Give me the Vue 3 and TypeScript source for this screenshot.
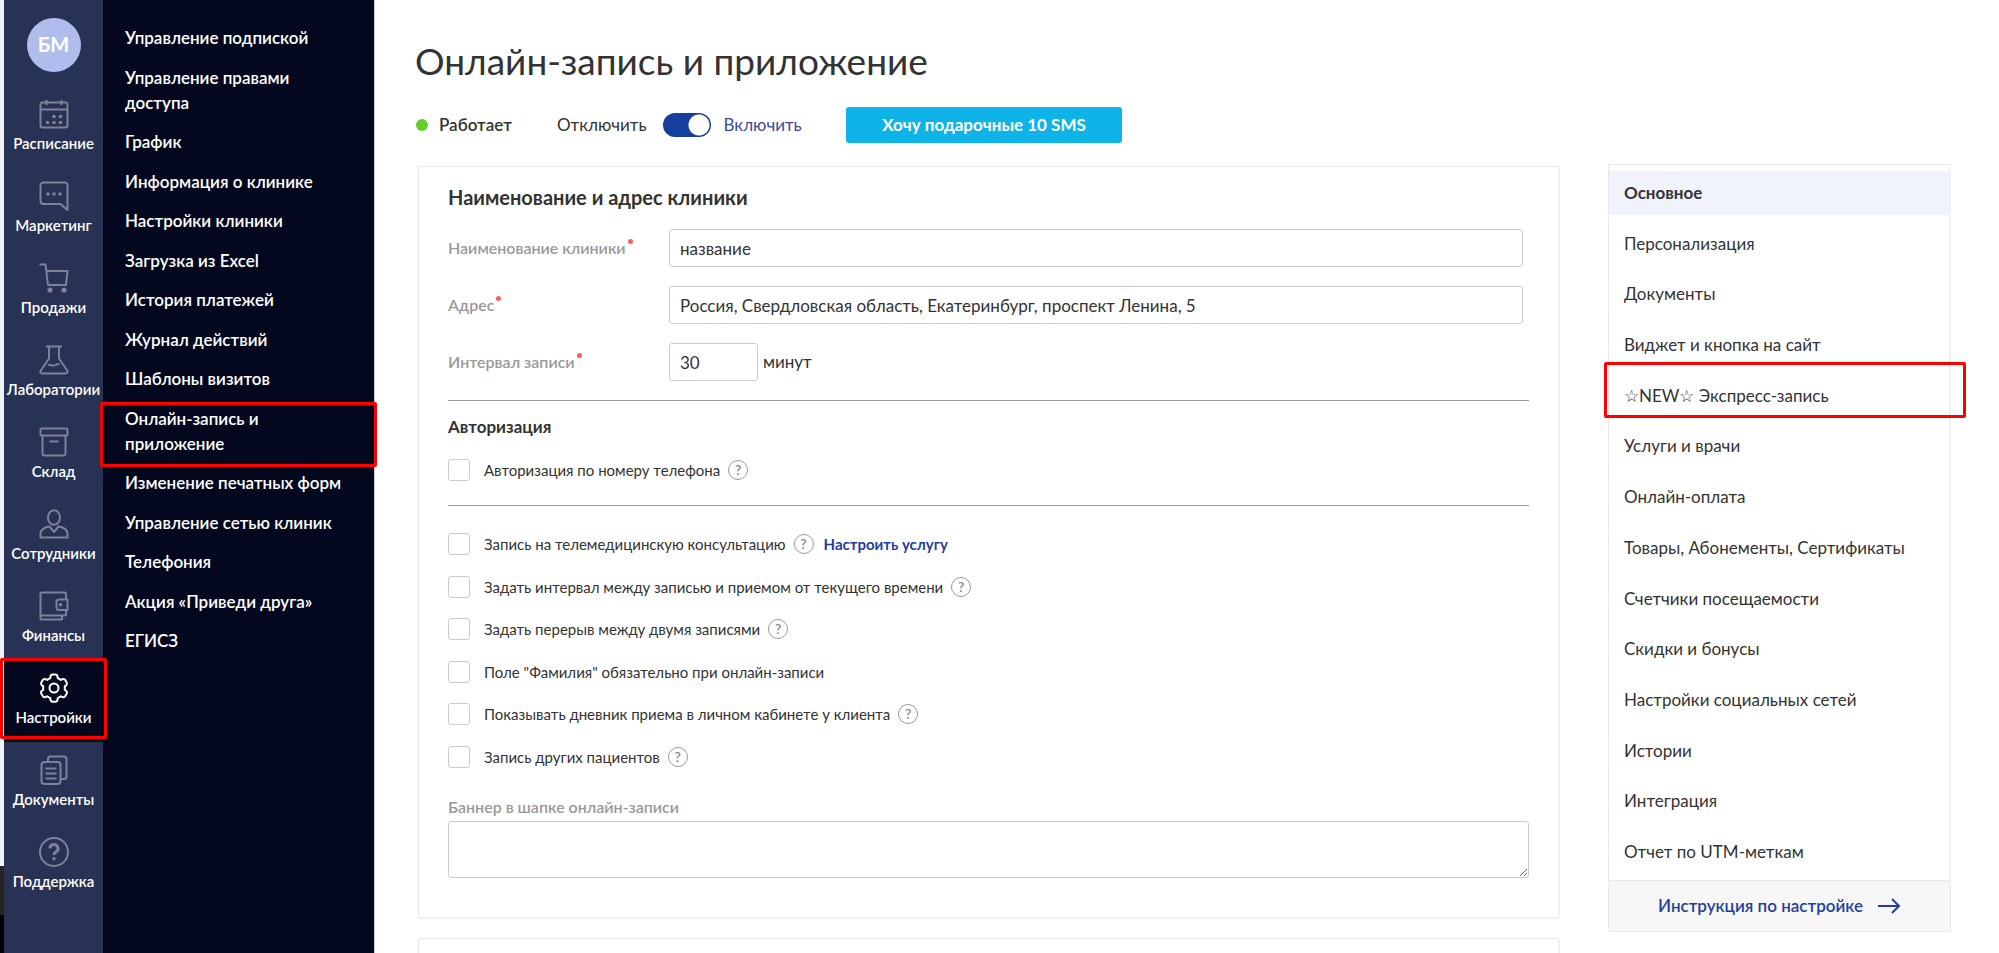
<script setup lang="ts">
import { ref } from 'vue'

interface RailItem {
  icon: string
  label: string
  active?: boolean
}

interface Option {
  id: string
  label: string
  help: boolean
  link?: string
  checked: boolean
}

const railItems: RailItem[] = [
  { icon: 'calendar', label: 'Расписание' },
  { icon: 'chat', label: 'Маркетинг' },
  { icon: 'cart', label: 'Продажи' },
  { icon: 'flask', label: 'Лаборатории' },
  { icon: 'box', label: 'Склад' },
  { icon: 'person', label: 'Сотрудники' },
  { icon: 'wallet', label: 'Финансы' },
  { icon: 'gear', label: 'Настройки', active: true },
  { icon: 'docs', label: 'Документы' },
  { icon: 'help', label: 'Поддержка' },
]

const menuItems: string[] = [
  'Управление подпиской',
  'Управление правами доступа',
  'График',
  'Информация о клинике',
  'Настройки клиники',
  'Загрузка из Excel',
  'История платежей',
  'Журнал действий',
  'Шаблоны визитов',
  'Онлайн-запись и приложение',
  'Изменение печатных форм',
  'Управление сетью клиник',
  'Телефония',
  'Акция «Приведи друга»',
  'ЕГИСЗ',
]
const markedMenuItem = 'Онлайн-запись и приложение'

const sections: string[] = [
  'Основное',
  'Персонализация',
  'Документы',
  'Виджет и кнопка на сайт',
  '☆NEW☆ Экспресс-запись',
  'Услуги и врачи',
  'Онлайн-оплата',
  'Товары, Абонементы, Сертификаты',
  'Счетчики посещаемости',
  'Скидки и бонусы',
  'Настройки социальных сетей',
  'Истории',
  'Интеграция',
  'Отчет по UTM-меткам',
]
const currentSection = 'Основное'
const markedSection = '☆NEW☆ Экспресс-запись'

const enabled = ref(true)
const clinicName = ref('название')
const address = ref('Россия, Свердловская область, Екатеринбург, проспект Ленина, 5')
const interval = ref('30')
const phoneAuth = ref(false)
const banner = ref('')

const options = ref<Option[]>([
  { id: 'tele', label: 'Запись на телемедицинскую консультацию', help: true, link: 'Настроить услугу', checked: false },
  { id: 'lead', label: 'Задать интервал между записью и приемом от текущего времени', help: true, checked: false },
  { id: 'break', label: 'Задать перерыв между двумя записями', help: true, checked: false },
  { id: 'surname', label: 'Поле "Фамилия" обязательно при онлайн-записи', help: false, checked: false },
  { id: 'diary', label: 'Показывать дневник приема в личном кабинете у клиента', help: true, checked: false },
  { id: 'others', label: 'Запись других пациентов', help: true, checked: false },
])
</script>

<template>
  <div class="page">
    <div class="edge"><span class="edge-dark"></span><span class="edge-black"></span></div>

    <nav class="rail" aria-label="Разделы">
      <a href="#" class="avatar">БМ</a>
      <a v-for="item in railItems" :key="item.icon" href="#" class="rail-item" :class="{ active: item.active }">
        <svg class="rail-icon" viewBox="0 0 30 30" aria-hidden="true">
          <g v-if="item.icon === 'calendar'">
            <rect x="1.5" y="3.5" width="27" height="25" rx="2" />
            <path d="M1.5 10.5h27M7.5 1v5M22.5 1v5" />
            <g class="dots">
              <circle cx="15" cy="17.5" r="1.8" /><circle cx="21.5" cy="17.5" r="1.8" />
              <circle cx="8.5" cy="23.5" r="1.8" /><circle cx="15" cy="23.5" r="1.8" /><circle cx="21.5" cy="23.5" r="1.8" />
            </g>
          </g>
          <g v-else-if="item.icon === 'chat'">
            <path d="M4.5 1.5h21a3 3 0 0 1 3 3v24.5L21.5 23h-17a3 3 0 0 1-3-3V4.500a3 3 0 0 1 3-3z" />
            <g class="dots"><circle cx="9" cy="13" r="1.8" /><circle cx="15" cy="13" r="1.8" /><circle cx="21" cy="13" r="1.8" /></g>
          </g>
          <g v-else-if="item.icon === 'cart'">
            <path d="M.5 1.5h6L9 22h18l1.500-14H7.500" />
            <g class="dots"><circle cx="11" cy="27" r="2.6" /><circle cx="25" cy="27" r="2.6" /></g>
          </g>
          <g v-else-if="item.icon === 'flask'">
            <path d="M7 1.500h16M10 1.500v12L1.800 25.500c-.9 1.500 0 3 1.700 3h23c1.700 0 2.600-1.500 1.700-3L20 13.500v-12M9 20.500c3-2 4.500 1.500 7.500-.5 1.500-1 2.500-1 4-1" />
          </g>
          <g v-else-if="item.icon === 'box'">
            <rect x="1.5" y="1.5" width="27" height="7" rx="1" />
            <path d="M3.500 8.500v18a2 2 0 0 0 2 2h19a2 2 0 0 0 2-2v-18M10.500 14.500h9" />
          </g>
          <g v-else-if="item.icon === 'person'">
            <ellipse cx="15" cy="8.5" rx="6" ry="7.3" />
            <path d="M10.500 17.500 15 23l4.500-5.500c5 .5 9 3.500 9 7v4h-27v-4c0-3.500 4-6.500 9-7z" />
          </g>
          <g v-else-if="item.icon === 'wallet'">
            <path d="M27 8V3a1.500 1.500 0 0 0-1.500-1.500H3A1.500 1.500 0 0 0 1.500 3v24.500a1 1 0 0 0 1 1h20.500V25M1.500 24.500h24A1.500 1.500 0 0 0 27 23v-4M28.500 8.500H20a2.500 2.500 0 0 0-2.500 2.500v5.500A2.500 2.500 0 0 0 20 19h8.500z" />
            <g class="dots"><circle cx="21.5" cy="13.7" r="1.8" /></g>
          </g>
          <g v-else-if="item.icon === 'gear'">
            <path d="M11.500 3.500q.3-2 2-2h3q1.700 0 2 2l.3 1.700 3 1.700 1.700-.7q1.900-.6 2.800.9l1.500 2.600q.8 1.500-.7 2.700l-1.300 1v3.400l1.300 1q1.500 1.200.7 2.700l-1.500 2.600q-.9 1.500-2.800.9l-1.700-.7-3 1.700-.3 1.700q-.3 2-2 2h-3q-1.700 0-2-2l-.3-1.700-3-1.700-1.700.7q-1.900.6-2.800-.9l-1.500-2.600q-.8-1.500.7-2.700l1.300-1v-3.400l-1.300-1q-1.500-1.200-.7-2.700l1.500-2.600q.9-1.500 2.800-.9l1.700.7 3-1.700z" />
            <circle cx="15" cy="15" r="4.500" />
          </g>
          <g v-else-if="item.icon === 'docs'">
            <rect x="2.5" y="7" width="19" height="22" rx="3" />
            <path d="M9 6.500V4a2.500 2.500 0 0 1 2.500-2.500H25a2.500 2.500 0 0 1 2.500 2.500v17.500a2.500 2.500 0 0 1-2.500 2.500h-3M6.500 13.500h11M6.500 18.500h11M6.500 23.500h11" />
          </g>
          <g v-else>
            <circle cx="15" cy="15" r="14" />
            <path class="query" d="M11 11.500a4 4 0 1 1 6 3.400c-1.400.8-2 1.500-2 3.100" />
            <g class="dots"><circle cx="15" cy="21.8" r="1.700" /></g>
          </g>
        </svg>
        <span>{{ item.label }}</span>
      </a>
    </nav>

    <nav class="submenu" aria-label="Настройки">
      <ul>
        <li v-for="item in menuItems" :key="item" :class="{ marked: item === markedMenuItem }">
          <a href="#">{{ item }}</a>
        </li>
      </ul>
    </nav>

    <main class="content">
      <h1>Онлайн-запись и приложение</h1>

      <div class="status">
        <span class="state"><i></i>Работает</span>
        <label class="switch">
          <span>Отключить</span>
          <input v-model="enabled" type="checkbox" role="switch" />
          <span class="on">Включить</span>
        </label>
        <button type="button" class="gift">Хочу подарочные 10 SMS</button>
      </div>

      <div class="columns">
        <div class="cards">
          <form class="card" @submit.prevent>
            <h2>Наименование и адрес клиники</h2>
            <div class="field">
              <label class="caption required" for="clinic">Наименование клиники</label>
              <input id="clinic" v-model="clinicName" type="text" class="box wide" />
            </div>
            <div class="field">
              <label class="caption required" for="address">Адрес</label>
              <input id="address" v-model="address" type="text" class="box wide" />
            </div>
            <div class="field">
              <label class="caption required" for="interval">Интервал записи</label>
              <input id="interval" v-model="interval" type="text" class="box short" />
              <span class="unit">минут</span>
            </div>
            <hr />

            <h3>Авторизация</h3>
            <div class="option">
              <label><input v-model="phoneAuth" type="checkbox" /><span>Авторизация по номеру телефона</span></label>
              <button type="button" class="hint" aria-label="Подсказка">?</button>
            </div>
            <hr />

            <div class="options">
              <div v-for="option in options" :key="option.id" class="option">
                <label><input v-model="option.checked" type="checkbox" /><span>{{ option.label }}</span></label>
                <button v-if="option.help" type="button" class="hint" aria-label="Подсказка">?</button>
                <a v-if="option.link" href="#" class="setup">{{ option.link }}</a>
              </div>
            </div>

            <label class="caption banner-caption" for="banner">Баннер в шапке онлайн-записи</label>
            <textarea id="banner" v-model="banner" class="box"></textarea>
          </form>
          <section class="card next"></section>
        </div>

        <aside class="sections">
          <ul>
            <li v-for="item in sections" :key="item" :class="{ current: item === currentSection, marked: item === markedSection }">
              <a href="#">{{ item }}</a>
            </li>
          </ul>
          <a href="#" class="guide">
            <span>Инструкция по настройке</span>
            <svg viewBox="0 0 24 18" aria-hidden="true"><path d="M1 9h21M15 2l7 7-7 7" /></svg>
          </a>
        </aside>
      </div>
    </main>
  </div>
</template>

<style>
html,
body {
  margin: 0;
  background: #fff;
}
</style>

<style scoped>
* {
  box-sizing: border-box;
}

.page {
  display: flex;
  height: 100vh;
  overflow: hidden;
  color: #333;
  font-family: Lato, Roboto, sans-serif;
  font-size: 17px;
  line-height: 24px;
}

a {
  color: inherit;
  text-decoration: none;
}

ul {
  margin: 0;
  padding: 0;
  list-style: none;
}

button,
input,
textarea {
  font: inherit;
  color: inherit;
}

.edge {
  display: flex;
  flex: 0 0 4px;
  flex-direction: column;
  justify-content: flex-end;
  background: #f1f4f6;
}

.edge-dark {
  height: 49px;
  background: #262322;
}

.edge-black {
  height: 38px;
  background: #000;
}

.rail {
  display: flex;
  flex: 0 0 99px;
  flex-direction: column;
  align-items: stretch;
  padding-top: 18px;
  background: #283255;
  color: #fff;
}

.avatar {
  align-self: center;
  width: 54px;
  height: 54px;
  margin-bottom: 14px;
  border-radius: 50%;
  background: #b0bdec;
  font-size: 20px;
  font-weight: 700;
  line-height: 52px;
  text-align: center;
}

.rail-item {
  position: relative;
  display: flex;
  flex: 0 0 82px;
  flex-direction: column;
  align-items: center;
  padding-top: 13px;
  font-size: 15px;
  font-weight: 600;
  line-height: 20px;
}

.rail-item span {
  margin-top: 4px;
}

.rail-icon {
  width: 30px;
  height: 30px;
  fill: none;
  stroke: #7c8298;
  stroke-width: 2;
  stroke-linejoin: round;
}

.dots {
  fill: #7c8298;
  stroke: none;
}

.query {
  stroke-width: 3;
}

.rail-item.active {
  background: #03081f;
}

.active .rail-icon {
  stroke: #fff;
}

.rail-item.active::after,
.marked::after {
  position: absolute;
  z-index: 2;
  border: 3px solid #f00;
  border-radius: 2px;
  content: "";
  pointer-events: none;
}

.rail-item.active::after {
  inset: -2px -4px 3px -4px;
}

.submenu {
  flex: 0 0 272px;
  padding: 25px 22px;
  border-right: 1px solid #c9ccd4;
  background: #03081f;
  color: #fff;
  font-weight: 600;
  line-height: 25px;
}

.submenu ul {
  display: flex;
  flex-direction: column;
  justify-content: space-between;
  min-height: 628px;
}

.submenu a {
  display: block;
  max-width: 190px;
}

.submenu li:nth-child(n + 11) a {
  max-width: none;
}

.marked {
  position: relative;
}

.submenu .marked::after {
  inset: -4px -25px -11px -25px;
}

.content {
  flex: 1;
  min-width: 0;
  padding: 37px 48px 0 43px;
}

h1 {
  margin: 0 0 22px -3px;
  font-size: 37px;
  font-weight: 400;
  line-height: 48px;
}

.status {
  display: flex;
  align-items: center;
  height: 36px;
  margin: 0 0 23px -2px;
}

.state {
  display: flex;
  align-items: center;
  gap: 11px;
  width: 141px;
  font-weight: 600;
}

.state i {
  width: 12px;
  height: 12px;
  border-radius: 50%;
  background: #66cc29;
}

.switch {
  display: flex;
  align-items: center;
  width: 289px;
}

.switch input {
  width: 48px;
  height: 24px;
  margin: 0 13px 0 16px;
  border-radius: 12px;
  appearance: none;
  background: radial-gradient(circle at 36px 12px, #fff 10px, #163e9f 11px);
}

.switch input:not(:checked) {
  background: radial-gradient(circle at 12px 12px, #fff 10px, #9aa0b0 11px);
}

.on {
  color: #3e4b98;
}

.gift {
  width: 276px;
  height: 36px;
  padding: 0;
  border: 0;
  border-radius: 3px;
  background: #0eb3e8;
  color: #fff;
  font-weight: 700;
}

.columns {
  display: flex;
  align-items: flex-start;
  gap: 48px;
}

.cards {
  flex: 1;
  min-width: 0;
}

.card {
  display: flex;
  flex-direction: column;
  margin-bottom: 19px;
  padding: 18px 29px 39px;
  border: 1px solid #e8e8e8;
  border-right: 2px solid #f1f1f1;
  border-bottom: 2px solid #f1f1f1;
  border-radius: 3px;
}

.card.next {
  height: 120px;
}

h2,
h3 {
  margin: 0;
  font-weight: 700;
  line-height: 24px;
}

h2 {
  margin-bottom: 20px;
  font-size: 20px;
}

h3 {
  margin: 14px 0 19px;
  font-size: 17px;
}

.field {
  display: flex;
  align-items: center;
  height: 38px;
  margin-bottom: 19px;
}

.caption {
  flex: 0 0 221px;
  color: #999;
  font-size: 16px;
  font-weight: 600;
}

.required::after {
  display: inline-block;
  width: 5px;
  height: 5px;
  margin-left: 2px;
  border-radius: 50%;
  background: #ff5c5c;
  vertical-align: 10px;
  content: "";
}

.box {
  height: 38px;
  padding: 0 10px;
  border: 1px solid #ccc;
  border-radius: 3px;
  outline: 0;
  background: #fff;
}

.wide {
  flex: 1;
  min-width: 0;
  margin-right: 6px;
}

.short {
  width: 89px;
}

.unit {
  margin-left: 5px;
}

hr {
  width: 100%;
  height: 1px;
  margin: 0;
  border: 0;
  background: #999ba0;
}

.option {
  display: flex;
  align-items: center;
  height: 24px;
  font-size: 15px;
}

.option label {
  display: flex;
  align-items: center;
}

.option input {
  width: 22px;
  height: 22px;
  margin: 0 14px 0 0;
  border: 1px solid #ccc;
  border-radius: 3px;
  appearance: none;
  background: #fff;
}

.option input:checked {
  background: #163e9f;
}

.hint {
  width: 20px;
  height: 20px;
  margin-left: 8px;
  padding: 0;
  border: 1px solid #999;
  border-radius: 50%;
  background: none;
  color: #888;
  font-size: 14px;
  font-weight: 600;
  line-height: 18px;
}

.setup {
  margin-left: 10px;
  color: #233e9e;
  font-weight: 700;
}

h3 + .option {
  margin-bottom: 23px;
}

.options {
  display: flex;
  flex-direction: column;
  justify-content: space-between;
  min-height: 237px;
  margin-top: 26px;
}

.banner-caption {
  flex: none;
  margin: 26px 0 2px;
}

textarea.box {
  display: block;
  width: 100%;
  height: 57px;
  min-height: 57px;
  resize: vertical;
}

.sections {
  position: relative;
  flex: 0 0 343px;
  margin-top: -2px;
}

.sections ul {
  display: flex;
  flex-direction: column;
  justify-content: space-between;
  min-height: 716px;
  padding: 6px 0;
  border: 1px solid #e8e8e8;
  border-right: 2px solid #f1f1f1;
  border-bottom: 0;
}

.sections li a {
  display: block;
  padding: 10px 15px;
}

.current {
  background: #f0f3fb;
  font-weight: 700;
}

.sections .marked::after {
  inset: -12px -17px 0 -5px;
}

.guide {
  display: flex;
  align-items: center;
  justify-content: center;
  gap: 14px;
  height: 52px;
  border: 1px solid #e8e8e8;
  border-radius: 2px;
  background: #f7f7f7;
  color: #233e9e;
  font-weight: 600;
}

.guide svg {
  width: 24px;
  height: 18px;
  fill: none;
  stroke: currentColor;
  stroke-width: 2;
}
</style>
